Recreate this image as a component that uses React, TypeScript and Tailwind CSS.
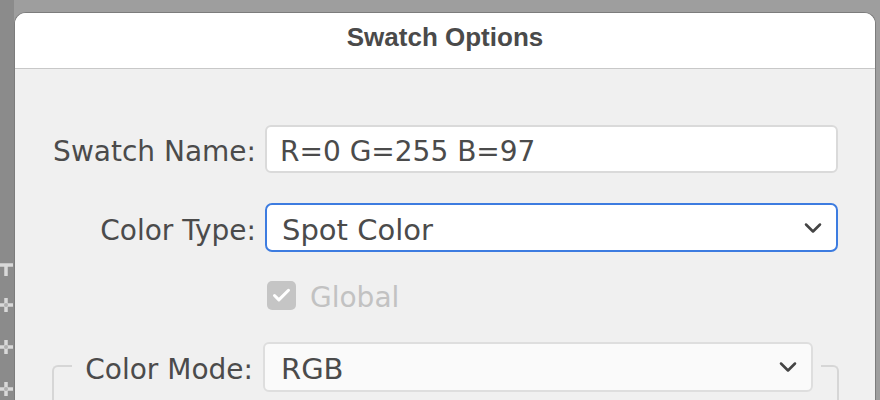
import { ChevronDown, Check } from "lucide-react";

const FONT = { fontFamily: '"DejaVu Sans", "Open Sans", sans-serif' };

function Crosshair() {
  return (
    <svg width="14" height="14" viewBox="0 0 14 14" className="block">
      <path d="M7 0v14M0 7h14" stroke="#d9d9d9" strokeWidth="3.5" />
      <circle cx="7" cy="7" r="2" fill="#b0b0b0" />
    </svg>
  );
}

export default function App() {
  return (
    <div className="flex h-[400px] w-[880px] overflow-hidden bg-[#9e9e9e]" style={FONT}>
      {/* canvas edge with guides */}
      <div className="flex w-[14px] flex-col items-start bg-[#8b8b8b] pt-[256px]">
        <div className="-ml-[1px] h-[20px] overflow-hidden">
          <svg width="14" height="20" viewBox="0 0 14 20" className="block">
            <path d="M0 9h14M7 9v11" stroke="#d9d9d9" strokeWidth="3.5" />
          </svg>
        </div>
        <div className="-ml-[1px] mt-[22px] flex flex-col gap-[28px]">
          <Crosshair />
          <Crosshair />
          <Crosshair />
        </div>
      </div>

      <div className="mt-[12px] mr-[4px] flex flex-1 flex-col overflow-hidden rounded-t-[12px] border-x border-t border-[#7c7c7c] bg-[#f0f0f0]">
        <div className="flex h-[56px] shrink-0 items-center justify-center border-b border-[#c8c8c8] bg-white pb-[8px]">
          <span
            className="text-[26px] font-bold leading-none text-[#4a4a4a]"
            style={{ fontFamily: '"Liberation Sans", Arial, sans-serif' }}
          >
            Swatch Options
          </span>
        </div>

        <div className="flex flex-col pt-[56px] text-[28px] leading-none text-[#4b4b4b]">
          <div className="flex h-[48px] items-center">
            <div className="w-[250px] pr-[9px] pt-[6px] text-right">Swatch Name:</div>
            <div className="flex h-[48px] w-[573px] items-center rounded-[6px] border-2 border-[#dadada] bg-white pl-[13px] pt-[5px] text-[28px]">
              R=0 G=255 B=97
            </div>
          </div>

          <div className="mt-[30px] flex h-[49px] items-center">
            <div className="w-[250px] pr-[9px] pt-[6px] text-right">Color Type:</div>
            <div className="flex h-[49px] w-[573px] items-center justify-between rounded-[7px] border-2 border-[#3d7ce0] bg-white pl-[15px] pr-[9px] text-[29px]">
              <span className="pt-[5px]">Spot Color</span>
              <ChevronDown size={28} strokeWidth={2.2} color="#444" />
            </div>
          </div>

          <div className="mt-[29px] flex h-[29px] items-center">
            <div className="w-[252px]" />
            <div className="flex h-[29px] w-[29px] items-center justify-center rounded-[5px] bg-[#c5c5c5]">
              <Check size={21} strokeWidth={3.5} color="#ffffff" />
            </div>
            <span className="ml-[14px] pt-[5px] text-[28px] text-[#c2c2c2]">Global</span>
          </div>

          <div className="relative mt-[32px] flex h-[50px] items-center">
            <div className="absolute left-[37px] top-[23px] h-[40px] w-[20px] rounded-tl-[6px] border-l-2 border-t-2 border-[#d6d6d6]" />
            <div className="absolute left-[806px] top-[23px] h-[40px] w-[18px] rounded-tr-[6px] border-r-2 border-t-2 border-[#d6d6d6]" />
            <div className="w-[248px] pr-[10px] pt-[6px] text-right">Color Mode:</div>
            <div className="flex h-[50px] w-[550px] items-center justify-between rounded-[6px] border-2 border-[#dedede] bg-[#fafafa] pl-[16px] pr-[9px] text-[29px]">
              <span className="pt-[5px]">RGB</span>
              <ChevronDown size={28} strokeWidth={2.2} color="#444" />
            </div>
          </div>
        </div>
      </div>
    </div>
  );
}
